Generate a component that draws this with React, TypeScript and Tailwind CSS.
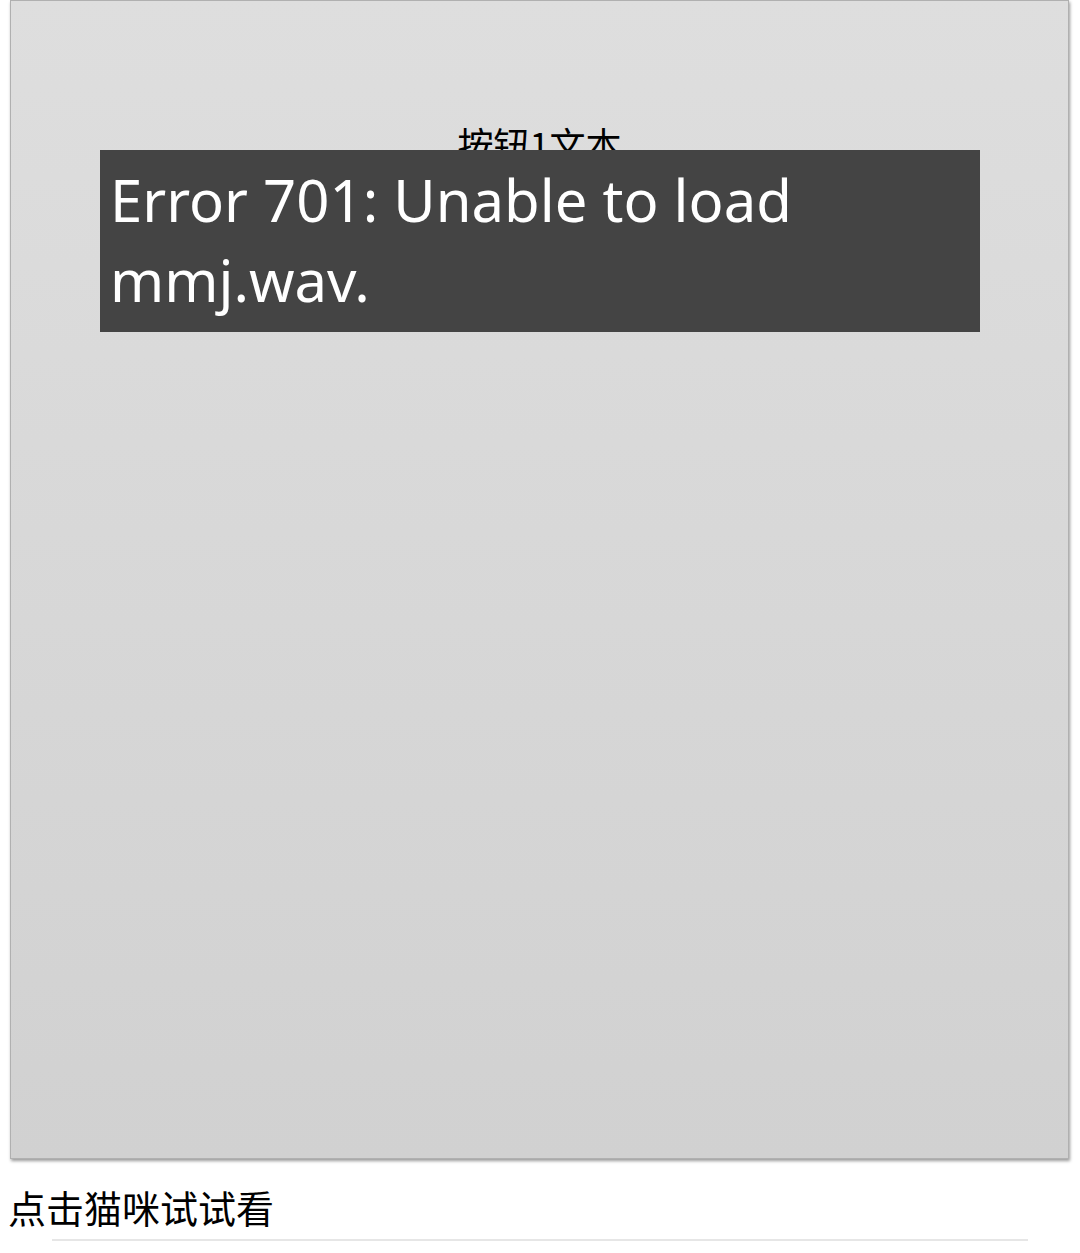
export default function App() {
  return (
    <div className="w-[1080px] h-[1253px] bg-white overflow-hidden" style={{ fontFamily: '"Noto Sans", "Noto Sans CJK SC", sans-serif' }}>
      <div className="relative ml-[10px] w-[1059px] h-[1159px] border border-[#b0b0b0] bg-gradient-to-b from-[#dedede] to-[#d1d1d1] shadow-[1px_2px_3px_rgba(0,0,0,0.4)]">
        <div className="pt-[120px] text-center text-[36px] leading-[44px] text-black" style={{ fontFamily: '"Noto Sans CJK SC", sans-serif' }}>
          按钮1文本
        </div>
        <div className="absolute left-[89px] top-[149px] w-[880px] h-[182px] bg-[#444444] px-[10px] pt-[10px] text-[58px] leading-[80px] text-white">
          Error 701: Unable to load mmj.wav.
        </div>
      </div>
      <div className="pl-[8px] pt-[24px] text-[38px] leading-[48px] text-black" style={{ fontFamily: '"Noto Sans CJK SC", sans-serif' }}>
        点击猫咪试试看
      </div>
      <div className="ml-[52px] mt-[8px] w-[976px] h-[2px] bg-[#e6e6e6]" />
    </div>
  );
}
